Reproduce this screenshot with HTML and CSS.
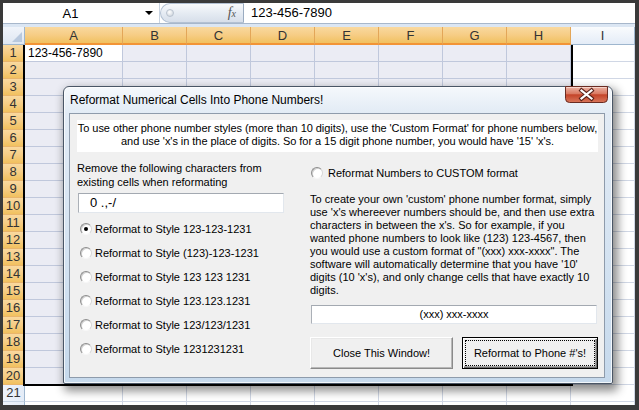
FILE: index.html
```html
<!DOCTYPE html>
<html>
<head>
<meta charset="utf-8">
<title>Reformat Numerical Cells Into Phone Numbers!</title>
<link rel="stylesheet" href="styles.css">
</head>
<body>
<div class="screen">
  <div class="fbar">
    <div class="namebox"><span class="nb-text">A1</span><span class="nb-drop"><span class="nb-arrow"></span></span></div>
    <div class="fxpill"><span class="pill-knob"></span><span class="fx">f<span class="fx-x">x</span></span></div>
    <div class="formula">123-456-7890</div>
  </div>
  <div class="fgap"></div>
  <div class="colheads">
    <div class="corner"><span class="corner-tri"></span></div>
    <div class="ch sel wA">A</div>
    <div class="ch sel">B</div>
    <div class="ch sel">C</div>
    <div class="ch sel">D</div>
    <div class="ch sel">E</div>
    <div class="ch sel">F</div>
    <div class="ch sel">G</div>
    <div class="ch sel">H</div>
    <div class="ch">I</div>
  </div>
  <div class="body">
    <div class="rowheads">
      <div class="rh sel">1</div>
      <div class="rh sel">2</div>
      <div class="rh sel">3</div>
      <div class="rh sel">4</div>
      <div class="rh sel">5</div>
      <div class="rh sel">6</div>
      <div class="rh sel">7</div>
      <div class="rh sel">8</div>
      <div class="rh sel">9</div>
      <div class="rh sel">10</div>
      <div class="rh sel">11</div>
      <div class="rh sel">12</div>
      <div class="rh sel">13</div>
      <div class="rh sel">14</div>
      <div class="rh sel">15</div>
      <div class="rh sel">16</div>
      <div class="rh sel">17</div>
      <div class="rh sel">18</div>
      <div class="rh sel">19</div>
      <div class="rh sel">20</div>
      <div class="rh">21</div>
      <div class="rh">22</div>
    </div>
    <div class="cells">
      <div class="col wA"></div>
      <div class="col"></div>
      <div class="col"></div>
      <div class="col"></div>
      <div class="col"></div>
      <div class="col"></div>
      <div class="col"></div>
      <div class="col"></div>
      <div class="col"></div>
      <div class="selection"><div class="active">123-456-7890</div></div>
    </div>
  </div>

  <div class="dialog">
    <div class="titlebar">
      <span class="title">Reformat Numerical Cells Into Phone Numbers!</span>
      <span class="closebtn">
        <svg width="43" height="17" viewBox="0 0 43 17">
          <defs>
            <linearGradient id="cg" x1="0" y1="0" x2="0" y2="1">
              <stop offset="0" stop-color="#ecb6a8"/>
              <stop offset="0.45" stop-color="#da7a62"/>
              <stop offset="0.52" stop-color="#c44429"/>
              <stop offset="1" stop-color="#d9775c"/>
            </linearGradient>
          </defs>
          <path d="M0.5 0.5 H42.5 V12.5 Q42.5 16.5 38.5 16.5 H4.5 Q0.5 16.5 0.5 12.5 Z" fill="url(#cg)" stroke="#6a2c22"/>
          <path d="M1.5 1.5 H41.5" stroke="#f6d3c9" stroke-width="1"/>
          <path d="M16.5 4.5 L26.5 12.5 M26.5 4.5 L16.5 12.5" stroke="#5a2219" stroke-width="4.2" stroke-linecap="square"/>
          <path d="M16.5 4.5 L26.5 12.5 M26.5 4.5 L16.5 12.5" stroke="#ffffff" stroke-width="2.2" stroke-linecap="square"/>
        </svg>
      </span>
    </div>
    <div class="client">
      <div class="info">To use other phone number styles (more than 10 digits), use the 'Custom Format' for phone numbers below,<br>and use 'x's in the place of digits. So for a 15 digit phone number, you would have '15' 'x's.</div>
      <div class="cols">
        <div class="left">
          <div class="label">Remove the following characters from<br>existing cells when reformating</div>
          <div class="textbox chars">0 .,-/</div>
          <div class="radio-row"><span class="radio on"></span><span>Reformat to Style 123-123-1231</span></div>
          <div class="radio-row"><span class="radio"></span><span>Reformat to Style (123)-123-1231</span></div>
          <div class="radio-row"><span class="radio"></span><span>Reformat to Style 123 123 1231</span></div>
          <div class="radio-row"><span class="radio"></span><span>Reformat to Style 123.123.1231</span></div>
          <div class="radio-row"><span class="radio"></span><span>Reformat to Style 123/123/1231</span></div>
          <div class="radio-row"><span class="radio"></span><span>Reformat to Style 1231231231</span></div>
        </div>
        <div class="right">
          <div class="radio-row custom"><span class="radio"></span><span>Reformat Numbers to CUSTOM format</span></div>
          <p class="help">To create your own 'custom' phone number format, simply<br>use 'x's whereever numbers should be, and then use extra<br>characters in between the x's. So for example, if you<br>wanted phone numbers to look like (123) 123-4567, then<br>you would use a custom format of "(xxx) xxx-xxxx". The<br>software will automatically determine that you have '10'<br>digits (10 'x's), and only change cells that have exactly 10<br>digits.</p>
          <div class="textbox fmt">(xxx) xxx-xxxx</div>
          <div class="buttons">
            <button class="btn close">Close This Window!</button>
            <button class="btn default"><span class="focus">Reformat to Phone #'s!</span></button>
          </div>
        </div>
      </div>
    </div>
  </div>
</div>
</body>
</html>
```

FILE: styles.css
```css
* { box-sizing: border-box; margin: 0; padding: 0; }
body { margin: 0; background: #ffffff; font-family: "Liberation Sans", Arial, sans-serif; }

.screen {
  position: relative;
  width: 639px;
  height: 410px;
  border: solid #3a3a3a;
  border-width: 3px 4px 5px 3px;
  overflow: hidden;
  background: #ffffff;
}

/* formula bar */
.fbar {
  display: flex;
  height: 21px;
  background: #ffffff;
  border-bottom: 1px solid #a7b7cb;
}
.namebox {
  width: 157px;
  display: flex;
  align-items: center;
  border-right: 1px solid #c9d4e2;
}
.nb-text {
  width: 135px;
  text-align: center;
  font-size: 13px;
  color: #000;
}
.nb-drop {
  flex: 1;
  display: flex;
  justify-content: center;
  align-items: center;
}
.nb-arrow {
  width: 0;
  height: 0;
  border-left: 4px solid transparent;
  border-right: 4px solid transparent;
  border-top: 4px solid #000;
}
.fxpill {
  width: 84px;
  height: 20px;
  display: flex;
  align-items: center;
  border: 1px solid #b3c1d3;
  border-right-color: #9aabc0;
  border-radius: 10px 0 0 10px;
  background: linear-gradient(#f8fafc, #e4eaf2 55%, #d7dfea);
}
.pill-knob {
  width: 8px;
  height: 8px;
  margin-left: 5px;
  border-radius: 50%;
  background: radial-gradient(circle at 40% 35%, #ffffff, #c6ced8);
  border: 1px solid #b9c3cf;
}
.fx {
  margin-left: auto;
  margin-right: 7px;
  font-family: "Liberation Serif", "Times New Roman", serif;
  font-style: italic;
  font-size: 14px;
  color: #555;
  line-height: 1;
}
.fx-x { font-size: 10px; }
.formula {
  flex: 1;
  padding-left: 7px;
  font-size: 13px;
  line-height: 20px;
  color: #000;
}
.fgap {
  height: 3px;
  background: #dbe6f3;
}

/* column headers */
.colheads {
  display: flex;
  height: 18px;
}
.corner {
  width: 22px;
  display: flex;
  align-items: flex-end;
  justify-content: flex-end;
  padding: 0 2px 2px 0;
  background: linear-gradient(#f0f4fa, #dfe7f2);
  border-right: 1px solid #9eb6ce;
  border-bottom: 1px solid #9eb6ce;
}
.corner-tri {
  width: 0;
  height: 0;
  border-left: 10px solid transparent;
  border-bottom: 10px solid #b9c9de;
}
.ch {
  width: 64px;
  text-align: center;
  font-size: 13px;
  line-height: 17px;
  color: #333;
  background: linear-gradient(#f9fbfd, #e4ecf7);
  border-right: 1px solid #9eb6ce;
  border-bottom: 1px solid #9eb6ce;
}
.ch.sel {
  background: linear-gradient(#f9d99f, #f6cd85 50%, #f1c15f);
  border-right-color: #e3a658;
  border-bottom: 2px solid #f29436;
}
.ch.wA { width: 98px; }

/* body */
.body {
  display: flex;
  height: 360px;
}
.rowheads {
  width: 22px;
  display: flex;
  flex-direction: column;
}
.rh {
  height: 17px;
  flex: none;
  text-align: center;
  font-size: 13px;
  line-height: 16px;
  color: #333;
  background: linear-gradient(90deg, #eef3fa, #e4ecf7);
  border-right: 1px solid #9eb6ce;
  border-bottom: 1px solid #c5d3e3;
}
.rh.sel {
  background: linear-gradient(#f9d99f, #f6cd85 50%, #f1c15f);
  border-right: 2px solid #f29436;
  border-bottom-color: #e9b56c;
}
.cells {
  position: relative;
  flex: 1;
  display: flex;
}
.col {
  width: 64px;
  flex: none;
  border-right: 1px solid #d0d7e5;
  background: repeating-linear-gradient(to bottom, transparent 0 16px, #d0d7e5 16px 17px);
}
.col.wA { width: 98px; }
.selection {
  position: absolute;
  left: -2px;
  top: 0;
  width: 550px;
  height: 341px;
  border: 2px solid #000;
  border-top: 0;
  background: rgba(60, 70, 150, 0.10);
}
.active {
  width: 97px;
  height: 16px;
  background: #ffffff;
  font-size: 12px;
  line-height: 16px;
  padding-left: 3px;
  color: #000;
}

/* dialog window */
.dialog {
  position: absolute;
  left: 60px;
  top: 83px;
  width: 550px;
  height: 298px;
  display: flex;
  flex-direction: column;
  padding: 0 7px 5px 5px;
  border: 1px solid #4a5666;
  border-radius: 6px 6px 2px 2px;
  background: linear-gradient(#f5f8fc 0, #e2ebf5 26px, #d3e2f1 60%, #c6d9ec 100%);
  box-shadow: inset 0 0 0 1px rgba(255, 255, 255, 0.75), 3px 5px 10px 2px rgba(0, 0, 0, 0.45);
}
.titlebar {
  height: 26px;
  flex: none;
  display: flex;
  align-items: center;
}
.title {
  padding-left: 1px;
  font-size: 12px;
  color: #000;
}
.closebtn {
  margin-left: auto;
  margin-right: -3px;
  align-self: flex-start;
  margin-top: -1px;
  height: 17px;
  display: flex;
}
.client {
  flex: 1;
  background: #f0f0f0;
  border: 1px solid #8e9bab;
  padding: 6px 6px 0 7px;
  font-size: 11px;
  color: #000;
}
.info {
  height: 32px;
  background: #ffffff;
  text-align: center;
  line-height: 13px;
  padding-top: 2px;
  white-space: nowrap;
  letter-spacing: -0.05px;
}
.cols {
  display: flex;
  gap: 26px;
  margin-top: 9px;
}
.left { width: 207px; flex: none; }
.right { width: 288px; flex: none; }
.label { line-height: 14px; }
.textbox {
  background: #ffffff;
  border: 1px solid;
  border-color: #a3a9b1 #e2e7ed #e2e7ed #abb0b7;
}
.textbox.chars {
  margin: 4px 0 4px 1px;
  width: 206px;
  height: 20px;
  padding-left: 11px;
  font-size: 13px;
  line-height: 18px;
}
.radio-row {
  display: flex;
  align-items: center;
  height: 24px;
  gap: 3px;
  padding-left: 3px;
  white-space: nowrap;
}
.radio-row.custom { padding-left: 1px; gap: 5px; }
.radio {
  flex: none;
  width: 12px;
  height: 12px;
  border-radius: 50%;
  border: 1px solid;
  border-color: #8d8d8d #d6d6d6 #f6f6f6 #8d8d8d;
  background: #ffffff;
  box-shadow: inset 1px 1px 0 #cfcfcf;
  display: flex;
  align-items: center;
  justify-content: center;
}
.radio.on::after {
  content: "";
  width: 4px;
  height: 4px;
  border-radius: 50%;
  background: #000;
}
.help {
  margin-top: 8px;
  line-height: 13px;
  white-space: nowrap;
}
.textbox.fmt {
  margin: 8px 1px 0;
  height: 19px;
  text-align: center;
  line-height: 17px;
}
.buttons {
  display: flex;
  gap: 9px;
  margin-top: 13px;
}
.btn {
  height: 32px;
  font-family: "Liberation Sans", Arial, sans-serif;
  font-size: 11px;
  color: #000;
  background: #f0f0f0;
  border: 1px solid;
  cursor: default;
}
.btn.close {
  width: 143px;
  border-color: #ffffff #8a8a8a #8a8a8a #ffffff;
  box-shadow: inset -1px -1px 0 #b8b8b8, inset 1px 1px 0 #e8e8e8;
}
.btn.default {
  width: 136px;
  border-color: #000;
  padding: 2px;
  box-shadow: inset 1px 1px 0 #ffffff, inset -1px -1px 0 #6e6e6e, inset -2px -2px 0 #a8a8a8;
  display: flex;
}
.focus {
  flex: 1;
  display: flex;
  align-items: center;
  justify-content: center;
  border: 1px dotted #000;
}
```
